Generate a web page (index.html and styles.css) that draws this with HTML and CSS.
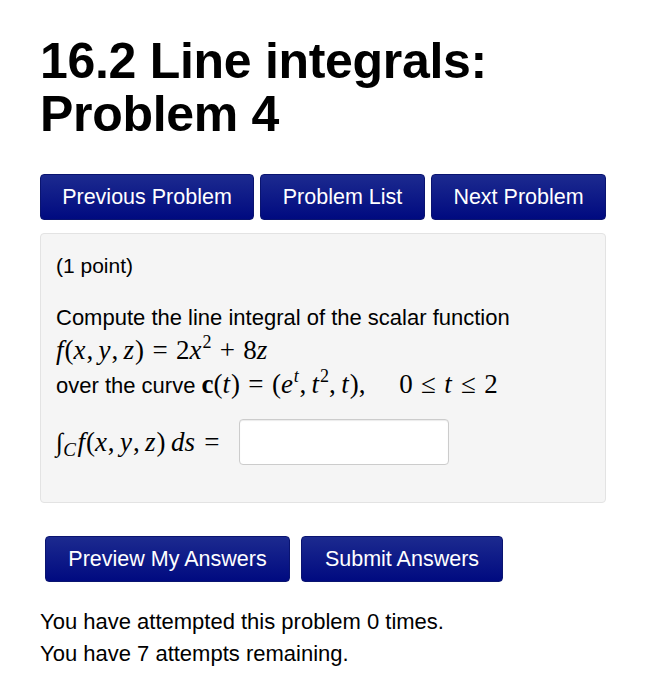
FILE: index.html
```html
<!DOCTYPE html>
<html>
<head>
<meta charset="utf-8">
<link rel="stylesheet" href="styles.css">
</head>
<body>
<div class="page">
  <h1 class="title">16.2 Line integrals:<br>Problem 4</h1>
  <div class="nav">
    <a class="btn nav-prev">Previous Problem</a>
    <a class="btn nav-list">Problem List</a>
    <a class="btn nav-next">Next Problem</a>
  </div>
  <div class="problem">
    <p class="points">(1 point)</p>
    <p class="statement">Compute the line integral of the scalar function<br>
      <span class="m"><i>f</i>(<i>x</i>,<span class="th"></span><i>y</i>,<span class="th"></span><i>z</i>)<span class="op">=</span>2<i>x</i><sup>2</sup><span class="op">+</span>8<i>z</i></span><br>
      over the curve <span class="m"><b>c</b>(<i>t</i>)<span class="op">=</span>(<i>e</i><sup><i>t</i></sup>,<span class="th"></span><i>t</i><sup>2</sup>,<span class="th"></span><i>t</i>),<span class="quad"></span>0<span class="op">≤</span><i>t</i><span class="op">≤</span>2</span>
    </p>
    <div class="answer-row">
      <span class="m"><span class="int">∫</span><sub class="c"><i>C</i></sub><i>f</i>(<i>x</i>,<span class="th"></span><i>y</i>,<span class="th"></span><i>z</i>)<span class="th"></span><i>ds</i><span class="op">=</span></span>
      <span class="input"></span>
    </div>
  </div>
  <div class="actions">
    <a class="btn act-preview">Preview My Answers</a>
    <a class="btn act-submit">Submit Answers</a>
  </div>
  <p class="attempts">You have attempted this problem 0 times.<br>You have 7 attempts remaining.</p>
</div>
</body>
</html>
```
FILE: styles.css
```css
html, body {
  margin: 0;
  padding: 0;
  background: #ffffff;
}
body {
  font-family: "Liberation Sans", Arial, sans-serif;
  color: #000;
}
.page {
  padding: 35px 40px 0 40px;
  width: 566px;
}
.title {
  margin: 0;
  font-size: 50px;
  line-height: 53px;
  font-weight: bold;
  letter-spacing: -0.3px;
}
.nav {
  display: flex;
  gap: 6px;
  margin-top: 33px;
}
.btn {
  display: flex;
  align-items: center;
  justify-content: center;
  height: 46px;
  box-sizing: border-box;
  border-radius: 4px;
  background: linear-gradient(#1c2a8f, #000a80);
  border: 1px solid #0a1470;
  color: #fff;
  font-size: 21.5px;
}
.nav-prev { width: 214px; }
.nav-list { width: 165px; }
.nav-next { width: 175px; }
.problem {
  margin-top: 13px;
  background: #f5f5f5;
  border: 1px solid #e3e3e3;
  border-radius: 4px;
  height: 270px;
  box-sizing: border-box;
  padding: 19px 15px 0 15px;
}
.points {
  margin: 0;
  font-size: 21px;
  line-height: 26px;
}
.statement {
  margin: 22px 0 0 0;
  font-size: 22px;
  line-height: 33px;
}
.m {
  font-family: "Liberation Serif", "Times New Roman", serif;
  font-size: 27px;
}
.m i { padding-right: 0.035em; }
.m sup {
  font-size: 18px;
  line-height: 0;
  vertical-align: 11px;
}
.m b { font-weight: bold; }
.op { margin: 0 0.31em; }
.th { display: inline-block; width: 0.2em; }
.quad { display: inline-block; width: 1.25em; }
.answer-row {
  display: flex;
  align-items: center;
  gap: 11px;
  margin-top: 17px;
}
.int {
  font-style: italic;
  font-size: 26px;
}
.c {
  font-size: 19px;
  line-height: 0;
  vertical-align: -5px;
  margin-right: 1px;
}
.input {
  width: 210px;
  height: 46px;
  box-sizing: border-box;
  background: #fff;
  border: 1px solid #ccc;
  border-radius: 4px;
  box-shadow: inset 0 1px 1px rgba(0,0,0,0.08);
}
.actions {
  display: flex;
  gap: 11px;
  margin-top: 33px;
  padding-left: 5px;
}
.act-preview { width: 245px; }
.act-submit { width: 202px; }
.attempts {
  margin: 24px 0 0 0;
  font-size: 22px;
  line-height: 32px;
}
```
